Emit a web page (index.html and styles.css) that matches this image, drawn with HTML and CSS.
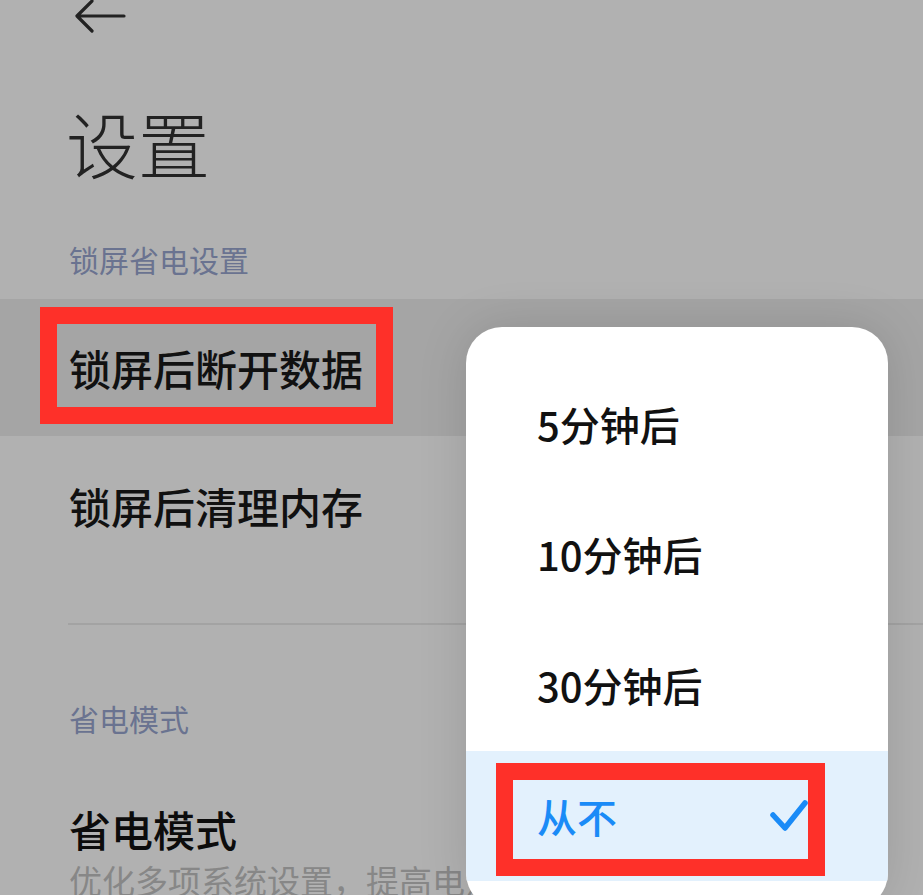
FILE: index.html
```html
<!DOCTYPE html>
<html lang="zh-CN">
<head>
  <meta charset="UTF-8" />
  <meta name="viewport" content="width=device-width, initial-scale=1.0" />
  <title>设置</title>
  <link rel="stylesheet" href="styles.css">
</head>
<body>
  <div class="page">
    <div class="topbar">
      <svg class="back" width="52" height="36" viewBox="0 0 52 36">
        <path d="M50 17H4M18 2L3 17l15 15" fill="none" stroke="#222" stroke-width="3.2" stroke-linecap="round" stroke-linejoin="round"/>
      </svg>
    </div>

    <h1 class="title">设置</h1>

    <div class="section-label">锁屏省电设置</div>
    <div class="row row-pressed">锁屏后断开数据</div>
    <div class="row row-second">锁屏后清理内存</div>
    <div class="divider"></div>

    <div class="section-label second">省电模式</div>
    <div class="item">
      <div class="item-title">省电模式</div>
      <div class="item-sub">优化多项系统设置，提高电池续航</div>
    </div>
  </div>

  <!-- popup menu for 锁屏后断开数据 -->
  <div class="popup">
    <div class="option">5分钟后</div>
    <div class="option">10分钟后</div>
    <div class="option">30分钟后</div>
    <div class="option selected">
      <span>从不</span>
      <svg class="check" width="40" height="34" viewBox="0 0 40 34">
        <path d="M4 15l12 13L36 3" fill="none" stroke="#1a8bf7" stroke-width="5.5" stroke-linecap="round" stroke-linejoin="round"/>
      </svg>
    </div>
  </div>

  <div class="mark mark-row"></div>
  <div class="mark mark-option"></div>
</body>
</html>
```

FILE: styles.css
```css
body {
  margin: 0;
  background: #b1b1b1;
  font-family: "Noto Sans CJK SC", "Noto Sans", sans-serif;
  overflow: hidden;
  height: 895px;
  position: relative;
}
.page {
  color: #111;
}
.topbar {
  height: 93px;
  padding-left: 74px;
}
.back {
  display: block;
  margin-top: -1px;
}
.title {
  margin: 0;
  padding-left: 66px;
  font-size: 72px;
  font-weight: 300;
  line-height: 100px;
  height: 100px;
  color: #222;
}
.section-label {
  padding-left: 69px;
  margin-top: 47px;
  font-size: 30px;
  line-height: 40px;
  color: #6a7390;
}
.section-label.second {
  margin-top: 73px;
}
.row {
  height: 138px;
  display: flex;
  align-items: center;
  padding-left: 69px;
  font-size: 42px;
  font-weight: 500;
  color: #111;
}
.section-label + .row {
  margin-top: 20px;
}
.row-pressed {
  background: #a5a5a5;
  height: 137px;
}
.divider {
  height: 2px;
  background: #a3a3a3;
  margin: 49px 0 0 68px;
}
.item {
  padding-left: 69px;
  margin-top: 66px;
}
.item-title {
  font-size: 42px;
  font-weight: 500;
  line-height: 50px;
  color: #0c0c0c;
}
.item-sub {
  font-size: 33px;
  line-height: 40px;
  margin-top: 6px;
  color: #878787;
  white-space: nowrap;
}

.popup {
  position: absolute;
  left: 466px;
  top: 327px;
  width: 422px;
  height: 582px;
  padding-top: 32px;
  box-sizing: border-box;
  background: #fff;
  border-radius: 36px;
  overflow: hidden;
  box-shadow: 0 0 50px rgba(0, 0, 0, 0.13);
}
.option {
  height: 130px;
  display: flex;
  align-items: center;
  justify-content: space-between;
  padding: 0 79px 0 71px;
  font-size: 40px;
  font-weight: 500;
  color: #111;
}
.option:nth-child(3) {
  height: 132px;
}
.option.selected {
  background: #e3f1fd;
  color: #1a8bf7;
}
.check {
  display: block;
  margin-top: 2px;
}

.mark {
  position: absolute;
  border: 17px solid #fe3029;
}
.mark-row {
  left: 40px;
  top: 307px;
  width: 319px;
  height: 83px;
}
.mark-option {
  left: 496px;
  top: 763px;
  width: 295px;
  height: 79px;
}
```
